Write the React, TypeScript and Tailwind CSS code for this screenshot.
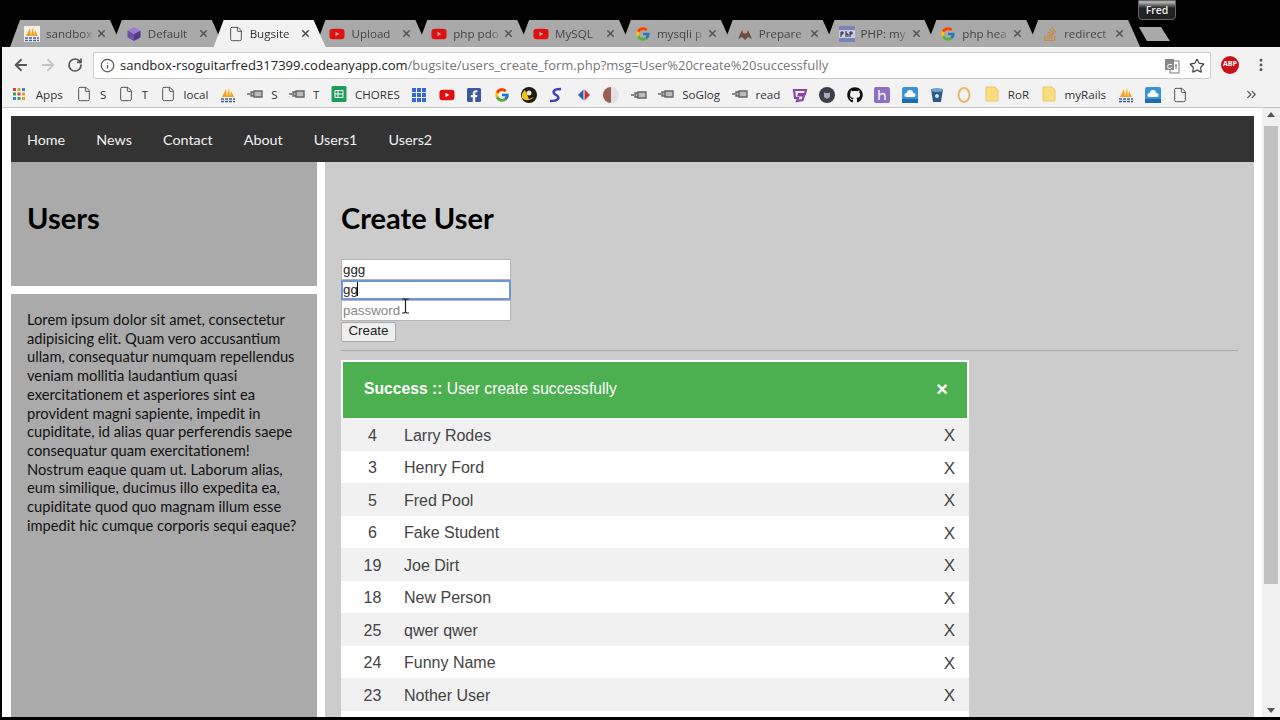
import React from "react";
import { ArrowLeft, ArrowRight, ChevronsRight, File, Info, MoreVertical, RotateCw, Star, X } from "lucide-react";
import { FaFacebookSquare, FaGithub, FaStackOverflow, FaYoutube } from "react-icons/fa";
import { FcGoogle } from "react-icons/fc";

const Pma = () => (
  <svg viewBox="0 0 16 16" className="w-4 h-4 shrink-0">
    <rect width="16" height="16" fill="#f4f1ea" />
    <path d="M2 10 6 2l1 8zM7 10l2-9 1 9zM10 10 11 4l3 6z" fill="#f2a01e" />
    <path d="M1 12h14M1 14.5h14" stroke="#3f62a8" strokeWidth="1.6" strokeDasharray="3 1" />
  </svg>
);

const Cube = () => (
  <svg viewBox="0 0 16 16" className="w-4 h-4 shrink-0">
    <path d="M8 1l6.5 3.5L8 8 1.5 4.5z" fill="#9b7fc9" />
    <path d="M1.5 4.5 8 8v7l-6.5-3.5z" fill="#6f4fa8" />
    <path d="M14.5 4.5 8 8v7l6.5-3.5z" fill="#553a8c" />
  </svg>
);

const Doc = () => <File className="w-4 h-4 shrink-0 text-[#555]" strokeWidth={1.5} />;
const Yt = () => <FaYoutube className="w-4 h-4 shrink-0 text-[#e01010]" />;
const G = () => <FcGoogle className="w-4 h-4 shrink-0" />;

const Spy = () => (
  <svg viewBox="0 0 16 16" className="w-4 h-4 shrink-0">
    <path d="M1 13 5 4l3 2 3-2 4 9-4-2-3 3-3-3z" fill="#6b4a42" />
    <circle cx="8" cy="5" r="2.5" fill="#c9a08c" />
  </svg>
);

const Php = () => (
  <svg viewBox="0 0 16 16" className="w-4 h-4 shrink-0">
    <rect width="16" height="16" fill="#7c82b8" />
    <rect y="4" width="16" height="8" fill="#c9cce6" />
    <path d="M2 11V6h2v2H2M7 5v6M7 8h2v3M11 11V6h2v2h-2" stroke="#222" strokeWidth="1" fill="none" />
  </svg>
);

const So = () => <FaStackOverflow className="w-4 h-4 shrink-0 text-[#c98a3c]" />;

const Plug = () => (
  <svg viewBox="0 0 16 16" className="w-4 h-4 shrink-0">
    <path d="M0 8h3M4 6h3v4H4zM7 5h8v6H7z" stroke="#666" strokeWidth="1.4" fill="#bbb" />
  </svg>
);

const AppsGrid = () => (
  <svg viewBox="0 0 16 16" className="w-4 h-4 shrink-0">
    {[
      "#d9453a", "#e6a127", "#3f7fd9",
      "#3f9d55", "#d9453a", "#e6a127",
      "#3f7fd9", "#3f9d55", "#e6a127",
    ].map((c, i) => (
      <rect key={i} x={2 + (i % 3) * 4.5} y={2 + Math.floor(i / 3) * 4.5} width="3" height="3" fill={c} />
    ))}
  </svg>
);

const Sheets = () => (
  <svg viewBox="0 0 16 16" className="w-4 h-4 shrink-0">
    <rect x="0.5" width="15" height="16" rx="1.5" fill="#1f9e5a" />
    <path d="M4 4.5h8v7H4zM4 8h8M7 4.5v7" stroke="#fff" strokeWidth="1" fill="none" />
  </svg>
);

const BlueGrid = () => (
  <svg viewBox="0 0 16 16" className="w-4 h-4 shrink-0">
    {[0, 1, 2, 3, 4, 5, 6, 7, 8].map((i) => (
      <rect key={i} x={1 + (i % 3) * 5} y={1 + Math.floor(i / 3) * 5} width="4" height="4" fill="#3367d6" />
    ))}
  </svg>
);

const Moon = () => (
  <svg viewBox="0 0 16 16" className="w-4 h-4 shrink-0">
    <circle cx="8" cy="8" r="8" fill="#1f1a10" />
    <path d="M1 11a8 8 0 0 1 3-8l4 9 5-2a8 8 0 0 1-12 1z" fill="#f2c21d" />
    <circle cx="8" cy="6" r="2.5" fill="#e8e4d8" />
  </svg>
);

const Swirl = () => (
  <svg viewBox="0 0 16 16" className="w-4 h-4 shrink-0">
    <path d="M13 2C6 2 3 5 8 8s2 6-6 6" stroke="#3d3fbf" strokeWidth="2.5" fill="none" />
  </svg>
);

const Diamond = () => (
  <svg viewBox="0 0 16 16" className="w-4 h-4 shrink-0">
    <path d="M8 2 2 8l6 6z" fill="#2f5fb5" />
    <path d="M8 2l6 6-6 6z" fill="#c9333a" />
    <path d="M8 2v12" stroke="#fff" />
  </svg>
);

const HalfCircle = () => (
  <svg viewBox="0 0 16 16" className="w-4 h-4 shrink-0">
    <path d="M8 0a8 8 0 0 0 0 16z" fill="#9c5f50" />
    <path d="M8 0a8 8 0 0 1 0 16z" fill="#e4dfe0" />
  </svg>
);

const PurpleS = () => (
  <svg viewBox="0 0 16 16" className="w-4 h-4 shrink-0">
    <path d="M2 3h12l-1 4H7l-.5 1.5H12L10.5 13 5 14l1-3H3z" fill="none" stroke="#8e44ad" strokeWidth="2.2" />
  </svg>
);

const DarkCircle = () => (
  <svg viewBox="0 0 16 16" className="w-4 h-4 shrink-0">
    <circle cx="8" cy="8" r="8" fill="#3a3f4b" />
    <path d="M5 5l1 1h4l1-1v5l-3 2-3-2z" fill="#aab" />
  </svg>
);

const Github = () => <FaGithub className="w-4 h-4 shrink-0 text-[#111]" />;

const Heroku = () => (
  <svg viewBox="0 0 16 16" className="w-4 h-4 shrink-0">
    <rect width="16" height="16" rx="2" fill="#8f6fc0" />
    <path d="M5 3v10M5 8c3-2 6-2 6 1v4" stroke="#eee" strokeWidth="1.6" fill="none" />
  </svg>
);

const Cloud = () => (
  <svg viewBox="0 0 16 16" className="w-4 h-4 shrink-0">
    <rect width="16" height="16" rx="2" fill="#3b93dc" />
    <path d="M4 10a2 2 0 0 1 1-4 3 3 0 0 1 6 0 2 2 0 0 1 1 4z" fill="#fff" />
    <rect y="12" width="16" height="4" fill="#1e6cae" />
  </svg>
);

const Bucket = () => (
  <svg viewBox="0 0 16 16" className="w-4 h-4 shrink-0">
    <path d="M2 2h12l-2 13H4z" fill="#2c5a8c" />
    <ellipse cx="8" cy="3" rx="6" ry="2" fill="#6fa1cf" />
    <circle cx="8" cy="9" r="2" fill="#d5e4f2" />
  </svg>
);

const Ring = () => (
  <svg viewBox="0 0 16 16" className="w-4 h-4 shrink-0">
    <ellipse cx="8" cy="8" rx="5.5" ry="7" stroke="#eab866" strokeWidth="2" fill="none" />
  </svg>
);

const Folder = () => (
  <svg viewBox="0 0 16 16" className="w-4 h-4 shrink-0">
    <path d="M2 1h9l3 3v11H2z" fill="#fbdc7f" stroke="#e8c868" />
  </svg>
);

const Translate = () => (
  <svg viewBox="0 0 16 16" className="w-[16px] h-[16px] shrink-0">
    <rect x="6" y="3" width="9" height="12" fill="#fff" stroke="#777" />
    <rect x="1" y="1" width="9" height="11" fill="#888" />
    <path d="M8 6.5H5.5a2 2 0 1 0 2 2.5" stroke="#fff" fill="none" />
    <path d="M11 7h2M12 7v4" stroke="#666" />
  </svg>
);

const tabs = [
  { title: "sandbox", icon: <Pma /> },
  { title: "Default", icon: <Cube /> },
  { title: "Bugsite", icon: <Doc />, active: true },
  { title: "Upload", icon: <Yt /> },
  { title: "php pdo", icon: <Yt /> },
  { title: "MySQL", icon: <Yt /> },
  { title: "mysqli p", icon: <G /> },
  { title: "Prepare", icon: <Spy /> },
  { title: "PHP: my", icon: <Php /> },
  { title: "php hea", icon: <G /> },
  { title: "redirect", icon: <So /> },
];

const bookmarks: { label?: string; icon: React.ReactNode }[] = [
  { label: "S", icon: <Doc /> },
  { label: "T", icon: <Doc /> },
  { label: "local", icon: <Doc /> },
  { icon: <Pma /> },
  { label: "S", icon: <Plug /> },
  { label: "T", icon: <Plug /> },
  { label: "CHORES", icon: <Sheets /> },
  { icon: <BlueGrid /> },
  { icon: <Yt /> },
  { icon: <FaFacebookSquare className="w-4 h-4 shrink-0 text-[#3b5998]" /> },
  { icon: <G /> },
  { icon: <Moon /> },
  { icon: <Swirl /> },
  { icon: <Diamond /> },
  { icon: <HalfCircle /> },
  { icon: <Plug /> },
  { label: "SoGlog", icon: <Plug /> },
  { label: "read", icon: <Plug /> },
  { icon: <PurpleS /> },
  { icon: <DarkCircle /> },
  { icon: <Github /> },
  { icon: <Heroku /> },
  { icon: <Cloud /> },
  { icon: <Bucket /> },
  { icon: <Ring /> },
  { label: "RoR", icon: <Folder /> },
  { label: "myRails", icon: <Folder /> },
  { icon: <Pma /> },
  { icon: <Cloud /> },
  { icon: <Doc /> },
];

const users = [
  [4, "Larry Rodes"],
  [3, "Henry Ford"],
  [5, "Fred Pool"],
  [6, "Fake Student"],
  [19, "Joe Dirt"],
  [18, "New Person"],
  [25, "qwer qwer"],
  [24, "Funny Name"],
  [23, "Nother User"],
];

const navItems = ["Home", "News", "Contact", "About", "Users1", "Users2"];

const lorem =
  "Lorem ipsum dolor sit amet, consectetur adipisicing elit. Quam vero accusantium ullam, consequatur numquam repellendus veniam mollitia laudantium quasi exercitationem et asperiores sint ea provident magni sapiente, impedit in cupiditate, id alias quar perferendis saepe consequatur quam exercitationem! Nostrum eaque quam ut. Laborum alias, eum similique, ducimus illo expedita ea, cupiditate quod quo magnam illum esse impedit hic cumque corporis sequi eaque?";

const Tab = ({ tab }: { tab: (typeof tabs)[number] }) => (
  <div
    className={`relative w-[112px] h-[27px] -mr-[10.2px] shrink-0 flex items-center pl-[14px] pr-[15px] [clip-path:polygon(0_100%,10px_0,100px_0,112px_100%)] ${
      tab.active ? "bg-[#f2f2f2] z-10 text-[#333]" : "bg-[#a9a9a9] text-[#444]"
    }`}
  >
    {tab.icon}
    <span className="ml-[6px] w-[48px] overflow-hidden whitespace-nowrap text-[11.6px] [mask-image:linear-gradient(to_right,black_78%,transparent)]">
      {tab.title}
    </span>
    <X className="ml-auto w-[11px] h-[11px] text-[#555]" strokeWidth={3.4} />
  </div>
);

export default function App() {
  return (
    <div className="relative w-[1280px] h-[720px] overflow-hidden bg-black flex flex-col font-['Open_Sans',sans-serif]">
      {/* browser chrome */}
      <div className="pt-[20px] pl-[10px] flex h-[47px] shrink-0">
        {tabs.map((t) => (
          <Tab key={t.title} tab={t} />
        ))}
        <div className="ml-[9px] mt-[7px] w-[31px] h-[14px] bg-[#a9a9a9] [clip-path:polygon(0_0,22px_0,100%_100%,8px_100%)]" />
      </div>
      <div className="absolute left-[1138px] top-0 w-[38px] h-[20px] rounded-b-[4px] border border-[#666] bg-gradient-to-b from-[#aaa] from-10% to-[#222] to-40% flex items-center justify-center pt-[2px] text-[10.5px] font-semibold text-[#eee]">
        Fred
      </div>

      <div className="ml-[2px] bg-[#f2f2f2] h-[35px] shrink-0 flex items-center pl-[10px] pr-[8px] text-[#555]">
        <ArrowLeft className="w-[18px] h-[18px]" strokeWidth={2.4} />
        <ArrowRight className="w-[18px] h-[18px] ml-[9px] text-[#c4c4c4]" strokeWidth={2.4} />
        <RotateCw className="w-[16px] h-[16px] ml-[10px]" strokeWidth={2.6} />
        <div className="ml-[10px] w-[1118px] h-[27px] mt-[2px] bg-white border border-[#ccc] rounded-[2px] flex items-center pl-[6px] pr-[5px]">
          <Info className="w-[15px] h-[15px] text-[#555]" strokeWidth={2} />
          <span className="ml-[5px] text-[13px] whitespace-nowrap text-[#222]">
            sandbox-rsoguitarfred317399.codeanyapp.com
            <span className="text-[#777]">/bugsite/users_create_form.php?msg=User%20create%20successfully</span>
          </span>
          <span className="ml-auto">
            <Translate />
          </span>
          <Star className="ml-[9px] w-[16px] h-[16px] text-[#444]" strokeWidth={1.8} />
        </div>
        <span className="ml-[10px] w-[18px] h-[18px] rounded-full bg-[#c8101c] text-white text-[7px] font-bold flex items-center justify-center">ABP</span>
        <MoreVertical className="ml-[14px] w-[16px] h-[18px] text-[#555]" strokeWidth={2.4} />
      </div>

      <div className="ml-[2px] bg-[#f2f2f2] h-[26px] shrink-0 border-b border-[#c4c4c4] flex items-center pl-[3px] relative text-[11.6px] text-[#333]">
        <div className="flex items-center gap-[9px] pl-[5.72px] pr-[7.5px] shrink-0">
          <AppsGrid />
          <span>Apps</span>
        </div>
        {bookmarks.map((b, i) => (
          <div key={i} className="flex items-center gap-[8px] px-[5.72px] shrink-0">
            {b.icon}
            {b.label && <span>{b.label}</span>}
          </div>
        ))}
        <ChevronsRight className="absolute right-[21px] top-[5px] w-[15px] h-[15px] text-[#555]" />
      </div>

      {/* page */}
      <div className="ml-[2px] flex-1 min-h-0 flex mb-[3px] bg-white font-['Lato',sans-serif]">
        <div className="flex-1 min-w-0 pt-[8px] pl-[9px] pr-[8px] flex flex-col">
          <nav className="h-[46px] shrink-0 bg-[#333] flex items-center pl-[16px] pt-[2px] gap-[31.2px] text-[14.3px] text-[#f2f2f2]">
            {navItems.map((n) => (
              <span key={n}>{n}</span>
            ))}
          </nav>
          <div className="flex-1 min-h-0 flex gap-[8px]">
            <aside className="w-[306px] shrink-0 flex flex-col gap-[8px]">
              <div className="h-[124px] shrink-0 bg-[#aaa] pl-[16px] pt-[37px]">
                <h2 className="text-[29px] leading-[38px] font-bold text-black">Users</h2>
              </div>
              <div className="flex-1 bg-[#aaa] px-[16px] pt-[16px] text-[14.7px] leading-[18.7px] text-[#111]">
                {lorem}
              </div>
            </aside>
            <main className="flex-1 min-w-0 bg-[#ccc] pl-[16px] pr-[16px] overflow-hidden">
              <h2 className="pt-[37px] text-[29px] leading-[38px] font-bold text-black">Create User</h2>
              <form className="mt-[22px] w-[170px] flex flex-col items-start font-['Liberation_Sans',sans-serif] text-[13.33px] relative">
                <input readOnly value="ggg" className="w-[170px] h-[20.5px] bg-white border border-[#b5b5b5] px-[1px] text-[#222] outline-none" />
                <input readOnly value="gg" className="w-[170px] h-[20.5px] bg-white border-2 border-[#7096d6] px-0 text-[#222] outline-none" />
                <input readOnly placeholder="password" className="w-[170px] h-[20.5px] bg-white border border-[#b5b5b5] px-[1px] text-[#222] outline-none placeholder:text-[#888]" />
                <span className="absolute left-[16px] top-[23px] w-[1px] h-[14px] bg-black" />
                <button type="button" className="mt-[1px] w-[55px] h-[20px] pb-[2px] bg-[#efefef] border border-[#aaa] rounded-[2px] text-[13.33px] text-[#222] leading-none">
                  Create
                </button>
              </form>
              <hr className="mt-[8px] border-t border-[#aaa]" />
              <div className="mt-[9px] w-[628px] bg-white font-['Liberation_Sans',sans-serif] text-[16px] text-[#444]">
                <div className="h-[58.5px] border-t-2 border-x-2 border-white bg-[#4caf50] text-white flex items-center pb-[2.5px] pl-[21px] pr-[19px]">
                  <span className="text-[15.7px]">
                    <b>Success ::</b> User create successfully
                  </span>
                  <b className="ml-auto text-[20px] leading-none">×</b>
                </div>
                {users.map(([id, name], i) => (
                  <div key={id} className={`h-[32.5px] pt-[3px] flex items-center ${i % 2 === 0 ? "bg-[#f1f1f1]" : "bg-white"}`}>
                    <span className="w-[63px] text-center">{id}</span>
                    <span>{name}</span>
                    <span className="ml-auto mr-[14px] text-[17px]">X</span>
                  </div>
                ))}
                <div className="h-[32.5px] bg-white" />
              </div>
            </main>
          </div>
        </div>
        <div className="w-[18px] shrink-0 bg-[#f1f1f1] flex flex-col items-center pt-[4px] pb-[4px] relative">
          <span className="w-0 h-0 border-x-[4px] border-x-transparent border-b-[5px] border-b-[#555]" />
          <span className="mt-[9px] w-[14px] h-[458px] bg-[#c1c1c1]" />
          <span className="mt-auto w-0 h-0 border-x-[4px] border-x-transparent border-t-[5px] border-t-[#555]" />
        </div>
      </div>

      {/* mouse cursor over the password field */}
      <svg viewBox="0 0 9 16" className="absolute left-[401px] top-[298px] w-[9px] h-[16px]">
        <path d="M1 1h2.5l1 1 1-1H8M4.5 2v12M1 15h2.5l1-1 1 1H8" stroke="#222" strokeWidth="1.2" fill="none" />
      </svg>
    </div>
  );
}
